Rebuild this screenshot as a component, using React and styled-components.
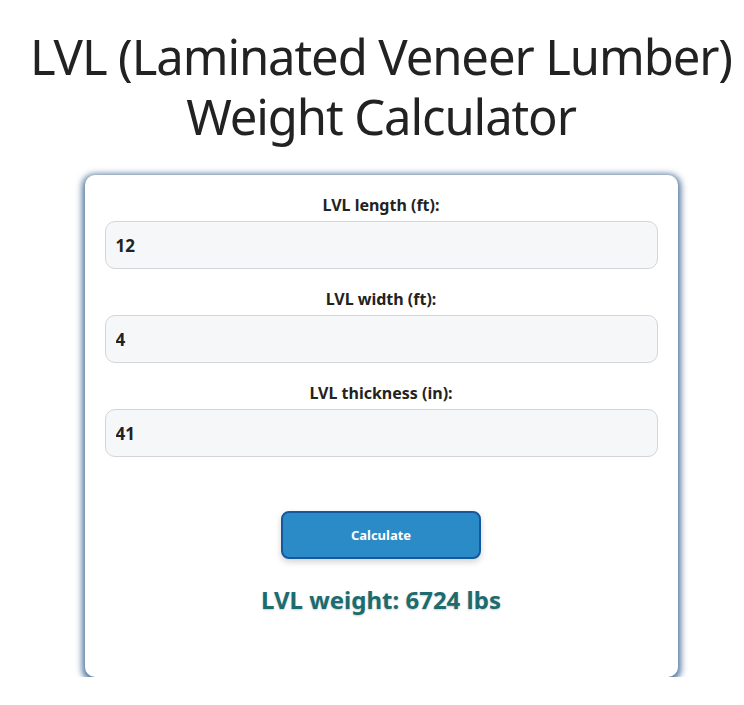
import React, { useState } from "react";
import styled, { createGlobalStyle } from "styled-components";

const GlobalStyle = createGlobalStyle`
  body {
    margin: 8px;
    background: #ffffff;
    font-family: "Noto Sans", "Open Sans", sans-serif;
    color: #222222;
  }
`;

// LVL density in lbs per cubic foot, used by the calculator
const DENSITY = 32.8;

export default function App() {
  const [length, setLength] = useState("12");
  const [width, setWidth] = useState("4");
  const [thickness, setThickness] = useState("41");
  const [weight, setWeight] = useState(6724);

  function calculate() {
    const volume = Number(length) * Number(width) * (Number(thickness) / 12);
    setWeight(Math.round(volume * DENSITY));
  }

  return (
    <>
      <GlobalStyle />
      <Page>
        <Title>
          LVL (Laminated Veneer Lumber)
          <br />
          Weight Calculator
        </Title>

        <Card>
          <Field>
            <Label>LVL length (ft):</Label>
            <Input value={length} onChange={(e) => setLength(e.target.value)} />
          </Field>
          <Field>
            <Label>LVL width (ft):</Label>
            <Input value={width} onChange={(e) => setWidth(e.target.value)} />
          </Field>
          <Field>
            <Label>LVL thickness (in):</Label>
            <Input value={thickness} onChange={(e) => setThickness(e.target.value)} />
          </Field>

          <CalcButton type="button" onClick={calculate}>Calculate</CalcButton>
          <Result>LVL weight: {weight} lbs</Result>
        </Card>
      </Page>
    </>
  );
}

const Page = styled.div`
  display: flex;
  flex-direction: column;
  align-items: center;
  padding-left: 18px;
`;

const Title = styled.h1`
  margin: 18px 0 29px;
  font-size: 49px;
  font-weight: 400;
  line-height: 60px;
  text-align: center;
  white-space: nowrap;
  letter-spacing: -1.1px;
  color: #222222;
`;

const Card = styled.div`
  width: 593px;
  box-sizing: border-box;
  padding: 20px 20px 62px;
  background: #ffffff;
  border-radius: 10px;
  box-shadow: 0 2px 6px 3px rgba(60, 100, 145, 0.85);
  display: flex;
  flex-direction: column;
  align-items: center;
`;

const Field = styled.div`
  width: 100%;
  display: flex;
  flex-direction: column;
  align-items: center;
  gap: 6px;
  margin-bottom: 20px;
`;

const Label = styled.label`
  font-size: 16px;
  font-weight: 700;
  line-height: 20px;
  color: #222222;
`;

const Input = styled.input`
  width: 100%;
  box-sizing: border-box;
  height: 48px;
  padding: 0 10px;
  border: 1px solid #d2d5da;
  border-radius: 10px;
  background: #f6f7f9;
  font-family: "Noto Sans", "Open Sans", sans-serif;
  font-size: 17px;
  font-weight: 700;
  color: #222222;
  outline: none;
`;

const CalcButton = styled.button`
  margin-top: 34px;
  width: 200px;
  height: 48px;
  background: #2a8bc7;
  border: 2px solid #14599f;
  border-radius: 8px;
  color: #ffffff;
  font-family: "Noto Sans", "Open Sans", sans-serif;
  font-size: 13px;
  font-weight: 700;
  box-shadow: 0 3px 6px rgba(0, 0, 0, 0.18);
  cursor: pointer;
`;

const Result = styled.div`
  margin-top: 26px;
  font-size: 24px;
  font-weight: 700;
  line-height: 30px;
  color: #1c6b6e;
  text-shadow: 0 1px 2px rgba(0, 0, 0, 0.2);
`;
